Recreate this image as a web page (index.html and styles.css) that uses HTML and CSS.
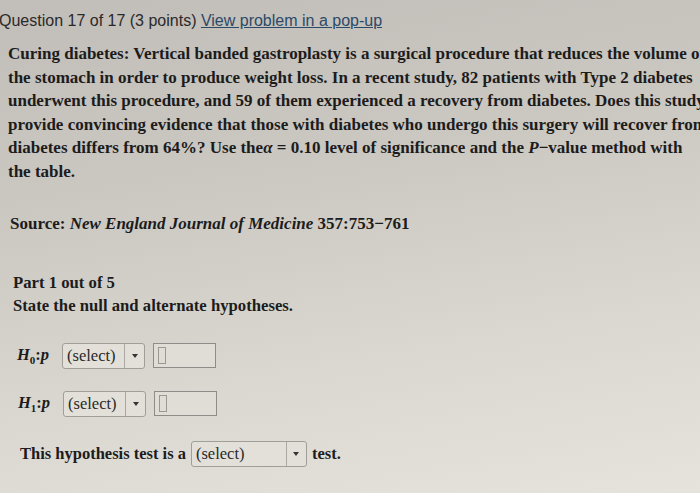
FILE: index.html
```html
<!DOCTYPE html>
<html>
<head>
<meta charset="utf-8">
<link rel="stylesheet" href="styles.css">
</head>
<body>
<div class="page">
  <div class="header">Question 17 of 17 (3 points) <a class="link" href="#">View problem in a pop-up</a></div>
  <div class="problem">
    <div class="line">Curing diabetes: Vertical banded gastroplasty is a surgical procedure that reduces the volume of</div>
    <div class="line">the stomach in order to produce weight loss. In a recent study, 82 patients with Type 2 diabetes</div>
    <div class="line">underwent this procedure, and 59 of them experienced a recovery from diabetes. Does this study</div>
    <div class="line">provide convincing evidence that those with diabetes who undergo this surgery will recover from</div>
    <div class="line">diabetes differs from 64%? Use the<i class="m">α</i> = 0.10 level of significance and the <i class="m">P</i>−value method with</div>
    <div class="line">the table.</div>
  </div>
  <div class="source">Source: <i>New England Journal of Medicine</i> 357:753−761</div>
  <div class="part">Part 1 out of 5</div>
  <div class="state">State the null and alternate hypotheses.</div>
  <div class="hrow h0">
    <span class="hlabel"><i>H</i><sub>0</sub>:<i>p</i></span>
    <span class="select"><span class="seltext">(select)</span><span class="arrow"><span class="tri"></span></span></span>
    <span class="input"><span class="cursorbox"></span></span>
  </div>
  <div class="hrow h1">
    <span class="hlabel"><i>H</i><sub>1</sub>:<i>p</i></span>
    <span class="select"><span class="seltext">(select)</span><span class="arrow"><span class="tri"></span></span></span>
    <span class="input"><span class="cursorbox"></span></span>
  </div>
  <div class="hrow last">
    <span class="lasttext">This hypothesis test is a</span>
    <span class="select wide"><span class="seltext">(select)</span><span class="arrow"><span class="tri"></span></span></span>
    <span class="lasttext">test.</span>
  </div>
</div>
</body>
</html>
```
FILE: styles.css
```css
html, body {
  margin: 0;
  padding: 0;
  width: 700px;
  height: 493px;
  overflow: hidden;
}
body {
  background: linear-gradient(170deg, #c1bdb8 0%, #cbc7c1 35%, #dbd8d1 70%, #e6e3dc 100%);
  color: #1c1c1c;
}
.page {
  width: 700px;
  height: 493px;
  overflow: hidden;
}
.header {
  font-family: "Liberation Sans", Arial, sans-serif;
  font-size: 16px;
  color: #2a2a2a;
  padding: 12px 0 0 0;
  margin-left: -1px;
  height: 23px;
  white-space: nowrap;
}
.link {
  color: #2c4a68;
  text-decoration: underline;
}
.problem {
  font-family: "Liberation Serif", "Times New Roman", serif;
  font-weight: bold;
  font-size: 17px;
  margin: 7px 0 0 8px;
  white-space: nowrap;
}
.line {
  height: 23.6px;
  line-height: 23.6px;
}
.m {
  font-style: italic;
}
.source {
  font-family: "Liberation Serif", "Times New Roman", serif;
  font-weight: bold;
  font-size: 17px;
  margin: 30px 0 0 10px;
  white-space: nowrap;
}
.part, .state {
  font-family: "Liberation Serif", "Times New Roman", serif;
  font-weight: bold;
  font-size: 16.7px;
  margin-left: 13px;
  white-space: nowrap;
}
.part { margin-top: 37px; line-height: 23px; }
.state { line-height: 23px; }
.hrow {
  display: flex;
  align-items: center;
  font-family: "Liberation Serif", "Times New Roman", serif;
  font-weight: bold;
  font-size: 16.5px;
  white-space: nowrap;
}
.h0 { margin: 26px 0 0 17px; }
.h1 { margin: 22px 0 0 18px; }
.last { margin: 24px 0 0 20px; }
.hlabel {
  width: 45px;
}
.hlabel sub {
  font-size: 11px;
}
.select {
  display: flex;
  align-items: stretch;
  height: 26px;
  width: 83px;
  border: 1px solid #a09e98;
  border-radius: 3px;
  background: #e3e0d9;
  font-weight: normal;
  box-sizing: border-box;
}
.seltext {
  flex: 1;
  padding-left: 4px;
  line-height: 24px;
  color: #2a2a2a;
}
.arrow {
  width: 19px;
  border-left: 1px solid #aaa8a2;
  display: flex;
  align-items: center;
  justify-content: center;
}
.tri {
  width: 0;
  height: 0;
  border-left: 3px solid transparent;
  border-right: 3px solid transparent;
  border-top: 4px solid #333;
}
.input {
  margin-left: 8px;
  width: 63px;
  height: 25px;
  border: 1px solid #8e8c88;
  background: #e0ddd6;
  display: flex;
  align-items: center;
  padding-left: 4px;
  box-sizing: border-box;
}
.cursorbox {
  width: 8px;
  height: 17px;
  border: 1px solid #9a9893;
  box-sizing: border-box;
}
.wide {
  width: 116px;
  margin-left: 5px;
}
.lasttext + .select + .lasttext {
  margin-left: 5px;
}
```
